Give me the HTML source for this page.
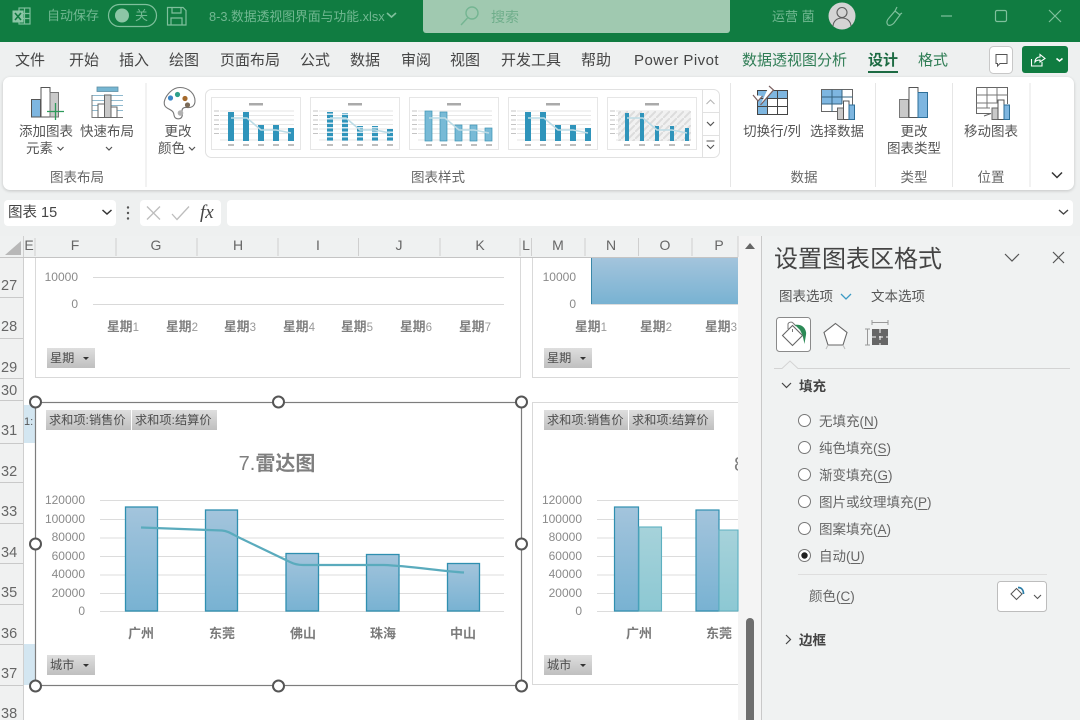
<!DOCTYPE html>
<html lang="zh-CN"><head><meta charset="utf-8"><title>Excel</title>
<style>
html,body{margin:0;padding:0;width:1080px;height:720px;overflow:hidden;background:#fff}
body{position:relative;font-family:"Liberation Sans","Noto Sans CJK SC",sans-serif;color:#4a4a4a;filter:blur(.3px)}
.b{position:absolute}
.t{position:absolute;line-height:20px;height:20px;white-space:nowrap;margin-top:1px}
.c{transform:translateX(-50%)}
.r{transform:translateX(-100%)}
.tab{font-size:15px;color:#454545;top:50px}
.g{color:#2f7d55}
.rl{font-size:13.5px;color:#555}
.gl{font-size:13.5px;color:#666;top:167px}
.col{font-size:14px;color:#666;top:235px;margin-top:0}
.row{font-size:14.5px;color:#666;left:1px}
.btn{position:absolute;height:20px;line-height:21px;font-size:12.2px;color:#4d4d4d;background:linear-gradient(#dedede,#bfbfbf);padding-left:3px;box-sizing:border-box;white-space:nowrap}
.btn.a::after{content:"";position:absolute;right:6px;top:9px;border-style:solid;border-width:3.5px 3.5px 0;border-color:#333 transparent transparent}
.ax{font-size:12px;color:#8a8a8a;margin-top:0}
.xl{font-size:12.8px;color:#7f7f7f;font-weight:bold;margin-top:0}
.xl i{font-style:normal;font-weight:normal;color:#999;font-size:11.5px}
.cat{font-size:13px;font-weight:bold;color:#7a7a7a}
.opt{font-size:13.5px;color:#666;left:819px}
u{text-underline-offset:2px}
</style></head><body>

<!-- backgrounds -->
<div class="b" style="left:0;top:0;width:1080px;height:42px;background:#107c41"></div>
<div class="b" style="left:0;top:42px;width:1080px;height:194px;background:#eef0f0"></div>
<div class="b" style="left:423px;top:0;width:307px;height:33px;background:#a0c9b0;border-radius:0 0 3px 3px"></div>
<div class="b" style="left:3px;top:77px;width:1071px;height:113px;background:#fff;border-radius:7px;box-shadow:0 1px 3px rgba(0,0,0,.18)"></div>
<div class="b" style="left:4px;top:200px;width:112px;height:26px;background:#fff;border-radius:4px"></div>
<div class="b" style="left:140px;top:200px;width:81px;height:26px;background:#fff;border-radius:4px"></div>
<div class="b" style="left:227px;top:200px;width:846px;height:26px;background:#fff;border-radius:4px"></div>
<div class="b" style="left:0;top:236px;width:738px;height:21px;background:#eff1f1;border-bottom:1px solid #c4c4c4"></div>
<div class="b" style="left:0;top:258px;width:23px;height:462px;background:#f0f1f1;border-right:1px solid #cfcfcf"></div>
<div class="b" style="left:24px;top:405px;width:11px;height:38px;background:#d3e6f1"></div>
<div class="b" style="left:24px;top:644px;width:11px;height:41px;background:#d3e6f1"></div>
<div class="b" style="left:738px;top:236px;width:23px;height:484px;background:#f4f4f4"></div>
<div class="b" style="left:761px;top:236px;width:319px;height:484px;background:#f0f2f2;border-left:1px solid #c9c9c9;box-sizing:border-box"></div>
<div class="b" style="left:746px;top:618px;width:8px;height:102px;background:#6e6e6e;border-radius:4px 4px 0 0"></div>

<!-- charts frames -->
<div class="b" style="left:35px;top:258px;width:486px;height:120px;border:1px solid #d9d9d9;border-top:0;box-sizing:border-box"></div>
<div class="b" style="left:532px;top:258px;width:206px;height:120px;border:1px solid #d9d9d9;border-top:0;border-right:0;box-sizing:border-box"></div>
<div class="b" style="left:532px;top:402px;width:206px;height:283px;border:1px solid #d9d9d9;border-right:0;box-sizing:border-box"></div>

<!-- drawing layer -->
<svg class="b" style="left:0;top:0" width="1080" height="720" viewBox="0 0 1080 720" fill="none">
<defs>
<linearGradient id="bl" x1="0" y1="0" x2="0" y2="1"><stop offset="0" stop-color="#a3c4dc"/><stop offset="1" stop-color="#78b2d2"/></linearGradient>
<linearGradient id="te" x1="0" y1="0" x2="0" y2="1"><stop offset="0" stop-color="#a6d2da"/><stop offset="1" stop-color="#8cc8d3"/></linearGradient>
<pattern id="stripe" width="3" height="4.5" patternUnits="userSpaceOnUse"><rect width="3" height="4.5" fill="#d5e8f1"/><rect width="3" height="3" fill="#2f94bb"/></pattern>
<pattern id="hatch" width="7" height="7" patternUnits="userSpaceOnUse"><rect width="7" height="7" fill="#f1f1f1"/><path d="M0 7L7 0" stroke="#dcdcdc" stroke-width="2"/></pattern>
<symbol id="thumbbase" viewBox="0 0 90 53" overflow="visible">
<rect x=".5" y=".5" width="89" height="52" fill="#fff" stroke="#e6e6e6"/>
<rect x="38" y="6" width="14" height="2.5" fill="#aaa"/>
<path d="M9 14H83M9 18.500H83M9 23H83M9 27.500H83M9 32H83M9 36.500H83M9 43H83" stroke="#dedede" stroke-width=".8"/>
<path d="M3 14H8M3 18.500H8M3 23H8M3 27.500H8M3 32H8M3 36.500H8" stroke="#c4c4c4" stroke-width="1"/>
</symbol>
<symbol id="thumbline" viewBox="0 0 90 53" overflow="visible">
<path d="M20 21H36L50 33H65L80 36" stroke="#bcdbe5" stroke-width="1.600"/>
<path d="M17 48h6M32 48h6M47 48h6M62 48h6M77 48h6" stroke="#a8a8a8" stroke-width="1.500"/>
</symbol>
</defs>

<!-- title bar icons -->
<g stroke="#7fc09c" stroke-width="1.200">
<rect x="19" y="8" width="11" height="16"/><path d="M19 13.500H30M19 18.500H30M24.500 8V24"/>
<rect x="12.500" y="10.500" width="11" height="12" fill="#8cc6a6" stroke="none"/>
<path d="M15 13l6 7M21 13l-6 7" stroke="#107c41" stroke-width="1.600"/>
<rect x="108.500" y="4.500" width="48" height="22" rx="11"/>
<path d="M167.500 7.500H183L186 10.500V25H167.500Z"/><path d="M172 8V13H181V8M171 25V18H182V25"/>
</g>
<circle cx="122" cy="15.500" r="7" fill="#8cc6a6"/>
<g stroke="#74b592" stroke-width="1.400"><circle cx="472" cy="13" r="6"/><path d="M467.500 18L461 25"/></g>
<path d="M387 13l4.500 4 4.500-4" stroke="#7fc09c" stroke-width="1.600"/>
<circle cx="842" cy="16" r="13.500" fill="#d4d4d4"/>
<g stroke="#5d5d5d" stroke-width="1.100"><circle cx="842" cy="12.500" r="5"/><path d="M833 26c.5-5 4-8 9-8s8.500 3 9 8"/></g>
<g stroke="#7fc09c" stroke-width="1.200">
<path d="M888 25c-2-2-1-5 1-7l6-7 5 4-6 8c-2 2-4 3-6 2zM895 11l2-4M899 15l3-2"/>
<path d="M941 16H952"/>
<rect x="995.500" y="10.500" width="11" height="11" rx="1.500"/>
<path d="M1049 10L1061 22M1061 10L1049 22"/>
</g>

<!-- tab underline, buttons -->
<rect x="868" y="71" width="30" height="2" fill="#1d6b43"/>
<rect x="989.500" y="46.500" width="23" height="27" rx="4" fill="#fff" stroke="#c8c8c8"/>
<path d="M996 54.500H1007V63.500H1000L997.500 66V63.500H996Z" stroke="#555" stroke-width="1"/>
<rect x="1022" y="46" width="46" height="27" rx="3" fill="#107c41"/>
<path d="M1031.500 59V66H1042V62M1035 62c0-3 2-5 5-5V54.500L1045 58.500L1040 62V60c-2 0-4 .5-5 2z" stroke="#fff" stroke-width="1.100"/>
<path d="M1056.500 58.500l3 2.500 3-2.500" stroke="#fff" stroke-width="1.500"/>

<!-- ribbon separators -->
<path d="M146 83V187M730.500 83V187M875.500 83V187M952.500 83V187M1030 83V187" stroke="#e6e6e6"/>

<!-- add element icon -->
<rect x="31.500" y="99.500" width="9" height="17.500" fill="#7eb6e0" stroke="#555"/>
<rect x="41" y="87.500" width="9" height="29.500" fill="#fff" stroke="#555"/>
<rect x="50" y="92.500" width="8.500" height="24.500" fill="#c9c9c9" stroke="#777"/>
<path d="M47 111.500H64M55.500 103V120" stroke="#2e9a5b" stroke-width="1.300"/>
<!-- quick layout -->
<rect x="97" y="87" width="21" height="4.500" fill="#76b6d2" stroke="#5f8fa5" stroke-width=".8"/>
<path d="M92 95.500H123M92 100.500H123M92 105.500H123M92 110.500H123" stroke="#8fb9ce"/>
<path d="M92 95V117.500H123" stroke="#777"/>
<rect x="98" y="104" width="6.500" height="13.500" fill="#fff" stroke="#666"/>
<rect x="104.500" y="95" width="6.500" height="22.500" fill="#c9c9c9" stroke="#666"/>
<rect x="111" y="107" width="6" height="10.500" fill="#fff" stroke="#666"/>
<!-- palette -->
<path d="M180 87.500c9 0 15 6.500 15 13.500 0 6-5 7-8 6.500-3-.3-5 .5-5 3.500 0 2 1 3 0 5.500-1 2.500-4 3-6.500 1.500-2-1.200-1-4-2.500-6-1.500-2.500-6-3-8-6-2-3.500 0-9 5-14 3-3 6.500-4.500 10-4.500z" fill="#fff" stroke="#777" stroke-width="1.100"/>
<circle cx="170.500" cy="98" r="2.600" fill="#3c86c7"/><circle cx="177.500" cy="94.500" r="2.600" fill="#2fa08b"/><circle cx="185" cy="98.500" r="2.600" fill="#a56a2c"/><circle cx="187.500" cy="105" r="2.600" fill="#7b6b58"/><circle cx="180.500" cy="113" r="2.800" fill="#b0b0b0"/>

<!-- ribbon chevrons -->
<path d="M57.500 147l3 3 3-3M106 147l3 3 3-3M189 147l3 3 3-3" stroke="#555" stroke-width="1.200"/>

<!-- gallery -->
<rect x="205.500" y="89.500" width="514" height="68" rx="6" fill="#fff" stroke="#e1e1e1"/>
<path d="M702.500 90V157M703 112.500H719M703 135.500H719" stroke="#e1e1e1"/>
<path d="M706.500 104l4-4 4 4" stroke="#b5b5b5" stroke-width="1.100"/>
<path d="M707 122l3.500 3.500 3.500-3.500" stroke="#555" stroke-width="1.200"/>
<path d="M706.500 141H714.500M707 145l3.500 3.500 3.500-3.500" stroke="#555" stroke-width="1.100"/>

<g transform="translate(211,97)"><use href="#thumbbase" width="90" height="53"/><g fill="#2f94bb"><rect x="17" y="15" width="6" height="29"/><rect x="32" y="15" width="6" height="29"/><rect x="47" y="28" width="6" height="16"/><rect x="62" y="28" width="6" height="16"/><rect x="77" y="31" width="6" height="13"/></g><use href="#thumbline" width="90" height="53"/></g>
<g transform="translate(310,97)"><use href="#thumbbase" width="90" height="53"/><g fill="url(#stripe)"><rect x="17" y="15" width="6" height="29"/><rect x="32" y="16" width="6" height="28"/><rect x="47" y="29" width="6" height="15"/><rect x="62" y="29" width="6" height="15"/><rect x="77" y="32" width="6" height="12"/></g><use href="#thumbline" width="90" height="53"/></g>
<g transform="translate(409,97)"><use href="#thumbbase" width="90" height="53"/><g fill="#78bad6" stroke="#3b94b5" stroke-width=".7"><rect x="16" y="14" width="7" height="30"/><rect x="31" y="15" width="7" height="29"/><rect x="46" y="28" width="7" height="16"/><rect x="61" y="28" width="7" height="16"/><rect x="76" y="31" width="7" height="13"/></g><use href="#thumbline" width="90" height="53"/></g>
<g transform="translate(508,97)"><use href="#thumbbase" width="90" height="53"/><g fill="#2f94bb"><rect x="17" y="15" width="6" height="29"/><rect x="32" y="15" width="6" height="29"/><rect x="47" y="28" width="6" height="16"/><rect x="62" y="28" width="6" height="16"/><rect x="77" y="31" width="6" height="13"/></g><use href="#thumbline" width="90" height="53"/></g>
<g transform="translate(607,97)"><use href="#thumbbase" width="90" height="53"/><rect x="11" y="14" width="73" height="30" fill="url(#hatch)"/><g fill="#2f94bb"><rect x="18" y="16" width="4" height="28"/><rect x="33" y="16" width="4" height="28"/><rect x="48" y="29" width="4" height="15"/><rect x="63" y="29" width="4" height="15"/><rect x="78" y="31" width="4" height="13"/></g><use href="#thumbline" width="90" height="53"/></g>

<!-- switch row/col -->
<rect x="757.500" y="90.500" width="30" height="24" fill="#fff" stroke="#444"/>
<rect x="758" y="91" width="29" height="7.500" fill="#7eb6e0"/><rect x="758" y="98" width="9.500" height="16" fill="#7eb6e0"/>
<path d="M757.500 98.500H787.500M757.500 106.500H787.500M767.500 90.500V114.500M777.500 90.500V114.500" stroke="#444"/>
<path d="M753 95l5 6 4.500-5M769 86l4.500 4-13 15" stroke="#7a6060" stroke-width="1.200" fill="#fff"/>
<!-- select data -->
<rect x="821.500" y="89.500" width="31" height="22" fill="#fff" stroke="#666"/>
<rect x="822" y="90" width="20" height="14" fill="#7eb6e0"/>
<path d="M821.500 97H852.500M821.500 104H842M832 89.500V111.500M842 89.500V104" stroke="#35637f"/>
<rect x="837.500" y="108" width="6" height="11.500" fill="#c9c9c9" stroke="#666"/><rect x="843.500" y="101" width="5.500" height="18.500" fill="#fff" stroke="#555"/><rect x="849" y="105" width="5.500" height="14.500" fill="#7eb6e0" stroke="#2d6f99"/>
<!-- change type -->
<rect x="899.500" y="99.500" width="9" height="18" fill="#c9c9c9" stroke="#777"/><rect x="909" y="87.500" width="9" height="30" fill="#fff" stroke="#555"/><rect x="918" y="92.500" width="9.500" height="25" fill="#7eb6e0" stroke="#2d6f99"/>
<!-- move chart -->
<path d="M976.500 87.500H1007.500V104M976.500 87.500V113.500H991L984 116" stroke="#666"/>
<path d="M976.500 95H1007.500M976.500 103H1000M976.500 108H990M987 87.500V108M997 87.500V103" stroke="#777"/>
<rect x="992" y="108" width="6" height="11.500" fill="#c9c9c9" stroke="#666"/><rect x="998" y="100" width="6" height="19.500" fill="#fff" stroke="#555"/><rect x="1004" y="105" width="5.500" height="14.500" fill="#7eb6e0" stroke="#2d6f99"/>
<path d="M1052 172.500l5 5 5-5" stroke="#333" stroke-width="1.500"/>

<!-- formula bar -->
<path d="M102.500 210l4.500 4 4.500-4" stroke="#333" stroke-width="1.500"/>
<g fill="#555"><circle cx="128" cy="207.500" r="1.200"/><circle cx="128" cy="213" r="1.200"/><circle cx="128" cy="218.500" r="1.200"/></g>
<path d="M147 206.500L160 219.500M160 206.500L147 219.500" stroke="#bdbdbd" stroke-width="1.300"/>
<path d="M172 214l5 5.500L189 206.500" stroke="#bdbdbd" stroke-width="1.300"/>
<path d="M1059 210l4.500 4 4.500-4" stroke="#444" stroke-width="1.400"/>

<!-- col header -->
<path d="M5 255L21 241V255Z" fill="#b8b8b8"/>
<path d="M23.500 236V257M35 238V256M116 238V256M197 238V256M278 238V256M358.500 238V256M440 238V256M520 238V256M531.500 238V256M585 238V256M638.500 238V256M692 238V256M738 236V257" stroke="#cfcfcf"/>
<!-- row seps -->
<path d="M0 297.500H23M0 338.500H23M0 378.500H23M0 400.500H23M0 443.500H23M0 482.500H23M0 523.500H23M0 563.500H23M0 604.500H23M0 644.500H23M0 685.500H23" stroke="#c9c9c9"/>

<!-- top-left chart -->
<path d="M93 277.500H504M93 304.500H504" stroke="#d9d9d9"/>
<!-- top-right chart -->
<rect x="591" y="258" width="147" height="46" fill="url(#bl)"/><path d="M591.500 258V304" stroke="#3a87a8"/>
<path d="M591 304.500H738" stroke="#dddddd"/>

<!-- selected chart -->
<path d="M100 500.500H504M100 519.500H504M100 538H504M100 556.500H504M100 575H504M100 593.500H504M100 611.500H504" stroke="#dcdcdc" stroke-width="1.100"/>
<g fill="url(#bl)" stroke="#2f8fb0" stroke-width="1.300">
<rect x="125.500" y="507" width="32" height="104"/><rect x="205.500" y="510" width="32" height="101"/><rect x="286" y="553.500" width="32.500" height="57.500"/><rect x="366.500" y="554.500" width="32.500" height="56.500"/><rect x="447.500" y="563.500" width="32" height="47.500"/>
</g>
<path d="M141 527.500L222 530.500C228 531 232 534 240 538L290 562C294 564 298 565 303 565H384C410 566 440 571 464 572.500" stroke="#5aabbd" stroke-width="2.200"/>
<rect x="35.500" y="402.500" width="486" height="283" stroke="#7d7d7d" stroke-width="1.200"/>
<g fill="#fff" stroke="#555" stroke-width="2"><circle cx="35.500" cy="402" r="5.500"/><circle cx="278.500" cy="402" r="5.500"/><circle cx="521.500" cy="402" r="5.500"/><circle cx="35.500" cy="544" r="5.500"/><circle cx="521.500" cy="544" r="5.500"/><circle cx="35.500" cy="686" r="5.500"/><circle cx="278.500" cy="686" r="5.500"/><circle cx="521.500" cy="686" r="5.500"/></g>

<!-- right chart -->
<path d="M597 500.500H738M597 519.500H738M597 538H738M597 556.500H738M597 575H738M597 593.500H738M597 611.500H738" stroke="#dcdcdc" stroke-width="1.100"/>
<g fill="url(#bl)" stroke="#2f8fb0" stroke-width="1.200"><rect x="614.500" y="507" width="24" height="104"/><rect x="696" y="510" width="23" height="101"/></g>
<g fill="url(#te)" stroke="#5cb0c0" stroke-width="1.100"><rect x="639" y="527" width="22.500" height="84"/><path d="M719 611V530H738V611Z"/></g>

<!-- scrollbar arrow -->
<path d="M745 249L750 243L755 249Z" fill="#666"/>

<!-- pane icons -->
<path d="M1005 254l7 7 7-7" stroke="#555" stroke-width="1.200"/>
<path d="M1053 252L1064 263M1064 252L1053 263" stroke="#555" stroke-width="1.200"/>
<path d="M841 294l5 5 5-5" stroke="#3b9ac4" stroke-width="1.300"/>
<rect x="776.500" y="317.500" width="34" height="34" rx="3" fill="#fff" stroke="#8a8a8a"/>
<path d="M782.500 335.500l10-10 10 10-10 10Z" fill="#fff" stroke="#666" stroke-width="1.100"/>
<path d="M788 329V324c.5-2 4-2.500 5-1l3 3M792.500 329v3" stroke="#777" stroke-width="1"/>
<path d="M795 325c6-1 10 2 11 7 .5 2-.5 5-1.500 12l-2-9-2.500-5Z" fill="#2c8a56"/>
<path d="M835.500 323.500L847 332.500L843 345H828L824 332.500Z" fill="#fff" stroke="#666" stroke-width="1.100"/>
<path d="M828 345l-2 4M843 345l2 4" stroke="#bbb"/>
<rect x="872" y="329" width="16" height="16" fill="#666"/>
<path d="M880 329V345M872 337H888" stroke="#fff" stroke-width="1" stroke-dasharray="4 3"/>
<path d="M872 322.500H888M872 320V325M888 320V325M867.500 329V345M865 329H870M865 345H870" stroke="#999"/>
<path d="M774 368.500H782L790 361L798 368.500H1070" stroke="#d3d3d3" fill="#f0f2f2"/>
<path d="M782 383l4.500 4.500 4.500-4.500" stroke="#444" stroke-width="1.200"/>
<path d="M786 635l4.500 4.500-4.500 4.500" stroke="#444" stroke-width="1.200"/>
<g fill="#fff" stroke="#777" stroke-width="1"><circle cx="804.500" cy="420.500" r="6"/><circle cx="804.500" cy="447.500" r="6"/><circle cx="804.500" cy="474.500" r="6"/><circle cx="804.500" cy="501.500" r="6"/><circle cx="804.500" cy="528.500" r="6"/><circle cx="804.500" cy="555.500" r="6"/></g>
<circle cx="804.500" cy="555.500" r="3.200" fill="#222"/>
<path d="M798 574.500H1047" stroke="#dedede"/>
<rect x="997.500" y="581.500" width="49" height="30" rx="3" fill="#fff" stroke="#bdbdbd"/>
<path d="M1011 594l5.500-5.500 5.500 5.500-5.500 5.500Z" stroke="#555" fill="#fff"/>
<path d="M1018 587.500c3.500 0 5.500 2.500 5.500 6.500" stroke="#2a7da8" stroke-width="1.700"/>
<path d="M1034 595l3.500 3.500 3.500-3.500" stroke="#555" stroke-width="1.100"/>
</svg>

<!-- title bar text -->
<span class="t" style="left:47px;top:5px;font-size:13px;color:#72b892">自动保存</span>
<span class="t" style="left:135px;top:5px;font-size:13px;color:#72b892">关</span>
<span class="t" style="left:209px;top:6px;font-size:12.800px;color:#72b892">8-3.数据透视图界面与功能.xlsx</span>
<span class="t" style="left:491px;top:6px;font-size:14px;color:#6fae8b">搜索</span>
<span class="t" style="left:772px;top:6px;font-size:13px;color:#72b892">运营 菌</span>

<!-- tabs -->
<span class="t tab" style="left:15px">文件</span><span class="t tab" style="left:69px">开始</span><span class="t tab" style="left:119px">插入</span><span class="t tab" style="left:169px">绘图</span><span class="t tab" style="left:220px">页面布局</span><span class="t tab" style="left:300px">公式</span><span class="t tab" style="left:350px">数据</span><span class="t tab" style="left:401px">审阅</span><span class="t tab" style="left:450px">视图</span><span class="t tab" style="left:501px">开发工具</span><span class="t tab" style="left:581px">帮助</span><span class="t tab" style="left:634px;letter-spacing:.45px">Power Pivot</span>
<span class="t tab g" style="left:742px">数据透视图分析</span>
<span class="t tab" style="left:868px;color:#1d6b43;font-weight:bold">设计</span>
<span class="t tab g" style="left:918px">格式</span>

<!-- ribbon labels -->
<span class="t rl c" style="left:46px;top:121px">添加图表</span>
<span class="t rl" style="left:26px;top:138px">元素</span>
<span class="t rl c" style="left:107px;top:121px">快速布局</span>
<span class="t rl c" style="left:178px;top:121px">更改</span>
<span class="t rl" style="left:158px;top:138px">颜色</span>
<span class="t rl c" style="left:772px;top:121px">切换行/列</span>
<span class="t rl c" style="left:837px;top:121px">选择数据</span>
<span class="t rl c" style="left:914px;top:121px">更改</span>
<span class="t rl c" style="left:914px;top:138px">图表类型</span>
<span class="t rl c" style="left:991px;top:121px">移动图表</span>
<span class="t gl c" style="left:77px">图表布局</span><span class="t gl c" style="left:438px">图表样式</span><span class="t gl c" style="left:804px">数据</span><span class="t gl c" style="left:914px">类型</span><span class="t gl c" style="left:991px">位置</span>

<!-- formula -->
<span class="t" style="left:8px;top:202px;font-size:14.500px;color:#444">图表 15</span>
<span class="t" style="left:200px;top:202px;font:italic 19px 'Liberation Serif',serif;line-height:20px;color:#444">fx</span>

<!-- col letters -->
<span class="t col c" style="left:29px">E</span><span class="t col c" style="left:75px">F</span><span class="t col c" style="left:156px">G</span><span class="t col c" style="left:238px">H</span><span class="t col c" style="left:318px">I</span><span class="t col c" style="left:399px">J</span><span class="t col c" style="left:480px">K</span><span class="t col c" style="left:526px">L</span><span class="t col c" style="left:558px">M</span><span class="t col c" style="left:611px">N</span><span class="t col c" style="left:665px">O</span><span class="t col c" style="left:719px">P</span>

<!-- rows -->
<span class="t row" style="top:275px">27</span><span class="t row" style="top:316px">28</span><span class="t row" style="top:357px">29</span><span class="t row" style="top:380px">30</span><span class="t row" style="top:420px">31</span><span class="t row" style="top:461px">32</span><span class="t row" style="top:501px">33</span><span class="t row" style="top:542px">34</span><span class="t row" style="top:582px">35</span><span class="t row" style="top:623px">36</span><span class="t row" style="top:663px">37</span><span class="t row" style="top:703px">38</span>
<span class="t" style="left:24px;top:411px;font-size:11px;color:#555">1:</span>

<!-- chart 1 text -->
<span class="t ax r" style="left:78px;top:267px">10000</span><span class="t ax r" style="left:78px;top:294px">0</span>
<span class="t xl c" style="left:123px;top:317px">星期<i>1</i></span><span class="t xl c" style="left:182px;top:317px">星期<i>2</i></span><span class="t xl c" style="left:240px;top:317px">星期<i>3</i></span><span class="t xl c" style="left:299px;top:317px">星期<i>4</i></span><span class="t xl c" style="left:357px;top:317px">星期<i>5</i></span><span class="t xl c" style="left:416px;top:317px">星期<i>6</i></span><span class="t xl c" style="left:475px;top:317px">星期<i>7</i></span>
<div class="btn a" style="left:47px;top:348px;width:48px">星期</div>

<!-- chart sel text -->
<div class="btn" style="left:46px;top:410px;width:85px">求和项:销售价</div>
<div class="btn" style="left:132px;top:410px;width:85px">求和项:结算价</div>
<span class="t" style="left:277px;top:453px;transform:translateX(-50%);font-size:20px;font-weight:bold;color:#7f7f7f"><span style="font-weight:normal">7.</span>雷达图</span>
<span class="t ax r" style="left:85px;top:490px">120000</span><span class="t ax r" style="left:85px;top:509px">100000</span><span class="t ax r" style="left:85px;top:527px">80000</span><span class="t ax r" style="left:85px;top:546px">60000</span><span class="t ax r" style="left:85px;top:564px">40000</span><span class="t ax r" style="left:85px;top:583px">20000</span><span class="t ax r" style="left:85px;top:601px">0</span>
<span class="t cat c" style="left:141px;top:623px">广州</span><span class="t cat c" style="left:222px;top:623px">东莞</span><span class="t cat c" style="left:303px;top:623px">佛山</span><span class="t cat c" style="left:383px;top:623px">珠海</span><span class="t cat c" style="left:463px;top:623px">中山</span>
<div class="btn a" style="left:47px;top:655px;width:48px">城市</div>

<!-- right charts text -->
<span class="t ax r" style="left:576px;top:267px">10000</span><span class="t ax r" style="left:576px;top:294px">0</span>
<span class="t xl c" style="left:591px;top:317px">星期<i>1</i></span><span class="t xl c" style="left:656px;top:317px">星期<i>2</i></span>
<div class="b" style="left:700px;top:317px;width:38px;height:20px;overflow:hidden"><span class="t xl" style="left:5px;top:0">星期<i>3</i></span></div>
<div class="btn a" style="left:544px;top:348px;width:48px">星期</div>
<div class="btn" style="left:544px;top:410px;width:84px">求和项:销售价</div>
<div class="btn" style="left:629px;top:410px;width:85px">求和项:结算价</div>
<div class="b" style="left:730px;top:453px;width:8px;height:22px;overflow:hidden"><span class="t" style="left:4px;top:1px;font-size:20px;color:#7f7f7f">8</span></div>
<span class="t ax r" style="left:582px;top:490px">120000</span><span class="t ax r" style="left:582px;top:509px">100000</span><span class="t ax r" style="left:582px;top:527px">80000</span><span class="t ax r" style="left:582px;top:546px">60000</span><span class="t ax r" style="left:582px;top:564px">40000</span><span class="t ax r" style="left:582px;top:583px">20000</span><span class="t ax r" style="left:582px;top:601px">0</span>
<span class="t cat c" style="left:639px;top:623px">广州</span><span class="t cat c" style="left:719px;top:623px">东莞</span>
<div class="btn a" style="left:544px;top:655px;width:48px">城市</div>

<!-- pane text -->
<span class="t" style="left:774px;top:249px;font-size:24px;color:#444">设置图表区格式</span>
<span class="t" style="left:779px;top:286px;font-size:13.500px;color:#555">图表选项</span>
<span class="t" style="left:871px;top:286px;font-size:13.500px;color:#555">文本选项</span>
<span class="t" style="left:799px;top:376px;font-size:13.500px;font-weight:bold;color:#444">填充</span>
<span class="t opt" style="top:411px">无填充(<u>N</u>)</span>
<span class="t opt" style="top:438px">纯色填充(<u>S</u>)</span>
<span class="t opt" style="top:465px">渐变填充(<u>G</u>)</span>
<span class="t opt" style="top:492px">图片或纹理填充(<u>P</u>)</span>
<span class="t opt" style="top:519px">图案填充(<u>A</u>)</span>
<span class="t opt" style="top:546px">自动(<u>U</u>)</span>
<span class="t opt" style="left:809px;top:586px">颜色(<u>C</u>)</span>
<span class="t" style="left:799px;top:630px;font-size:13.500px;font-weight:bold;color:#444">边框</span>
</body></html>
